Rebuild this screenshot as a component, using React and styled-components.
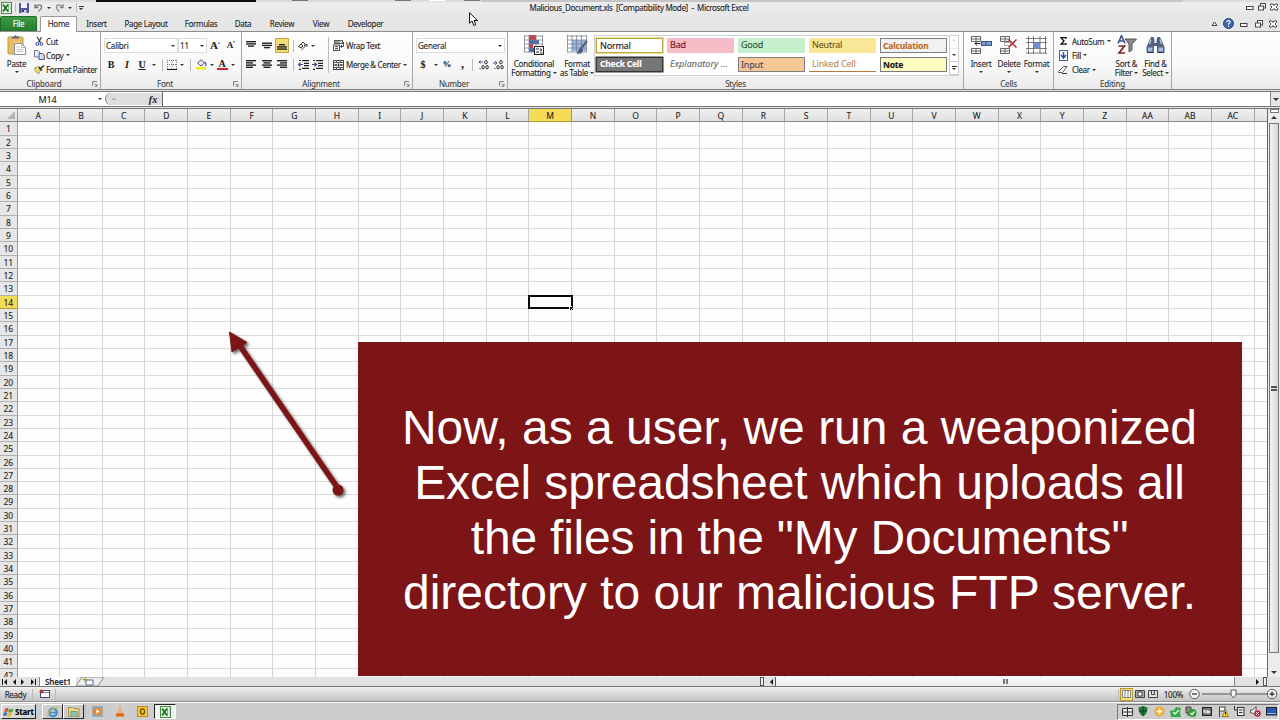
import React from "react";
import styled, { createGlobalStyle, css } from "styled-components";

const COL = 42.667;
const ROW = 13.333;
const ACTIVE_COL = "M";
const ACTIVE_ROW = 14;

const GlobalStyle = createGlobalStyle`
  * { box-sizing: border-box; }
  html, body { margin: 0; padding: 0; overflow: hidden; }
  body {
    width: 1280px;
    height: 720px;
    font-family: "Noto Sans", "Open Sans", sans-serif;
    font-size: 8px;
    letter-spacing: -0.360px;
    color: #1e1e1e;
    -webkit-text-stroke: 0.100px;
  }
  svg { display: block; flex-shrink: 0; }
`;

const Window = styled.div`
  position: relative;
  display: flex;
  flex-direction: column;
  width: 1280px;
  height: 720px;
  background: #e4e4e4;
  white-space: nowrap;
  overflow: hidden;
`;

/* ---------- generic bits ---------- */

const Slot = styled.div`
  display: flex;
  align-items: center;
  justify-content: center;
  flex-shrink: 0;
  width: ${p => p.$w}px;
`;

const Separator = styled.div`
  width: 1px;
  height: ${p => p.$h || 12}px;
  background: #bbb;
`;

const Spacer = styled.div`
  flex: 1;
`;

const Triangle = styled.div`
  width: 0;
  height: 0;
  border: 2px solid transparent;
  border-bottom-width: 0;
  border-top: 2.5px solid #333;
`;

function Drop({ w }) {
  return <Slot $w={w}><Triangle /></Slot>;
}

function Sep({ w, h }) {
  return <Slot $w={w}><Separator $h={h} /></Slot>;
}

function Svg({ w, h, children }) {
  return <svg width={w} height={h} viewBox={`0 0 ${w} ${h}`} fill="none">{children}</svg>;
}

/* ---------- icons ---------- */

const ExcelIcon = () => (
  <Svg w={11} h={12}>
    <rect x="0.5" y="0.5" width="10" height="11" fill="#e8f1e4" stroke="#4c8a4a" />
    <path d="M7.5 2v8M9 3h1M9 5h1M9 7h1" stroke="#8cb584" />
    <path d="M2 2.5l5 7M7 2.5l-5 7" stroke="#1e7a2c" strokeWidth="2" />
  </Svg>
);

const SaveIcon = () => (
  <Svg w={10} h={10}>
    <path d="M0 0h10v10H0z" fill="#4f5797" />
    <path d="M2 0h6v5H2z" fill="#eef0fa" />
    <path d="M2.5 7h5v3h-5z" fill="#c9cde8" />
    <path d="M3 7h2v2H3z" fill="#30376f" />
  </Svg>
);

const UndoIcon = () => (
  <Svg w={9} h={9}>
    <path d="M1 1v3.500h3.500M1.500 4C3 1 8 1 7.500 4.500 7.300 6.500 5.500 7 4.500 8.500" stroke="#777" strokeWidth="1.300" />
  </Svg>
);

const RedoIcon = () => (
  <Svg w={9} h={9}>
    <path d="M8 1v3.500H4.500M7.500 4C6 1 1 1 1.500 4.500 1.700 6.500 3 7 4 8.500" stroke="#888" strokeWidth="1.300" />
  </Svg>
);

const MinIcon = () => (
  <Svg w={8} h={8}>
    <rect x="0.500" y="3.500" width="6.500" height="3" stroke="#444" fill="#fff" />
  </Svg>
);

const RestoreIcon = () => (
  <Svg w={8} h={8}>
    <rect x="2.500" y="0.500" width="5" height="4.500" stroke="#444" fill="#fff" />
    <rect x="0.500" y="3" width="5" height="4" stroke="#444" fill="#fff" />
  </Svg>
);

const CloseIcon = () => (
  <Svg w={8} h={8}>
    <path d="M0.500 1h2.500l1 1.500L5 1h2.500v1.500L6 4l1.500 1.500V7H5L4 5.500 3 7H0.500V5.500L2 4 0.500 2.500z" stroke="#444" fill="#fff" />
  </Svg>
);

const HelpIcon = () => (
  <Svg w={11} h={11}>
    <circle cx="5.500" cy="5.500" r="5" fill="#3c67b0" stroke="#26437c" />
    <path d="M3.800 4.300c0-2.300 3.400-2.200 3.400-0.200 0 1.200-1.600 1.200-1.700 2.600M5.500 7.700v1.200" stroke="#fff" strokeWidth="1.100" />
  </Svg>
);

const PasteIcon = () => (
  <Svg w={20} h={21}>
    <rect x="1" y="2" width="15" height="17" rx="1" fill="#e7bd62" stroke="#c39a45" />
    <path d="M5 3.500V1.500h2L8.500 0 10 1.500h2v2z" fill="#666" />
    <path d="M7 7h6v11H7z" fill="#f7e9bf" opacity="0.600" />
    <path d="M7.500 8.500h7l4 4v7h-11z" fill="#fdfdfd" stroke="#8e8e99" />
    <path d="M14.500 8.500v4h4M9.500 12h3M9.500 14.500h7M9.500 16.500h7" stroke="#b9bcc9" />
  </Svg>
);

const CutIcon = () => (
  <Svg w={9} h={9}>
    <path d="M2 0l3.500 5.500M6.500 0L3.500 5.500" stroke="#333" strokeWidth="1.100" />
    <circle cx="2.300" cy="7" r="1.400" stroke="#2d4a92" />
    <circle cx="6.500" cy="7" r="1.400" stroke="#2d4a92" />
  </Svg>
);

const CopyIcon = () => (
  <Svg w={11} h={10}>
    <path d="M0.500 0.500h3.500l1.500 1.500v5h-5z" fill="#eef1fb" stroke="#6f7895" />
    <path d="M5 3.500h3.500L10.300 5v4.500H5z" fill="#d7ddf2" stroke="#46547f" />
  </Svg>
);

const PainterIcon = () => (
  <Svg w={11} h={9}>
    <path d="M0.500 3l4-1.500 2.500 3-2 4C3 8.500 1 6.500 0.500 3z" fill="#edd86c" stroke="#8a7c43" strokeWidth="0.700" />
    <path d="M5.500 4.500L10 0.500M5 2l3 3.500" stroke="#333" strokeWidth="1.500" />
  </Svg>
);

const BordersIcon = () => (
  <Svg w={10} h={10}>
    <path d="M0.500 0v9M5 0v9M9.500 0v9M0 0.500h10M0 4.500h10" stroke="#777" strokeDasharray="1 1" />
    <path d="M0 9.500h10" stroke="#111" />
  </Svg>
);

const FillColorIcon = () => (
  <Svg w={11} h={11}>
    <path d="M1.500 4L5 0.800 8.500 4 5 7z" fill="#e9ecf5" stroke="#555" />
    <path d="M8.500 3c1.500 1 1.500 3 1 4" stroke="#3a5da6" strokeWidth="1.300" />
    <path d="M0 8h10v2.700H0z" fill="#f3ee2c" />
  </Svg>
);

const AlignIcon = ({ rows, top = 0 }) => (
  <Svg w={10} h={11}>
    {rows.map(([x, w], i) => (
      <rect key={i} x={x} y={top + i * 2.200} width={w} height="1.400" fill="#222" />
    ))}
  </Svg>
);

const IndentIcon = ({ flip }) => (
  <Svg w={11} h={10}>
    <path d="M4 0.700h7M6 3.300h5M6 5.700h5M4 8.300h7M1 9.300h2M1 0.500h2" stroke="#222" strokeWidth="1.200" />
    <path d={flip ? "M0 4.500h4M2.500 2.500l2 2-2 2" : "M1 4.500h4M2.500 2.500l-2 2 2 2"} stroke="#3d5186" strokeWidth="1.200" />
  </Svg>
);

const OrientIcon = () => (
  <Svg w={10} h={10}>
    <path d="M0.500 5.500L3 3l2 2-2 2zM3.500 2.500L5 1l2.500 2.500L6 5" stroke="#333" />
    <path d="M3.500 9L9 3.500M9 3.500H6.500M9 3.500V6" stroke="#555" />
  </Svg>
);

const WrapIcon = () => (
  <Svg w={11} h={11}>
    <rect x="1.500" y="0.500" width="8" height="3" stroke="#555" />
    <rect x="0.500" y="5" width="6" height="5.500" stroke="#555" />
    <path d="M2 6.700h3M2 8.700h3M2 2h5" stroke="#333" />
    <path d="M10.500 2v4.500H7.500M9 5L7.500 6.500 9 8" stroke="#33518f" />
  </Svg>
);

const MergeIcon = () => (
  <Svg w={11} h={10}>
    <rect x="0.500" y="0.500" width="10" height="9" stroke="#444" />
    <path d="M0 2.500h11M0 7.500h11M3.500 0v2.500M7.500 0v2.500M3.500 7.500V10M7.500 7.500V10" stroke="#555" />
    <path d="M1.500 5h2.500M9.500 5H7M5.500 3.500v3" stroke="#222" strokeWidth="1.400" />
  </Svg>
);

const DecimalIcon = ({ less }) => (
  <Svg w={11} h={10}>
    <path d={less ? "M0 3h4M2 1.200L4 3 2 4.800" : "M1 2h4M2.500 0.500L1 2l1.500 1.500"} stroke="#3f5380" />
    <rect x="6.700" y="0.600" width="2.500" height="3.200" rx="1" stroke="#222" />
    <rect x="4" y="5.600" width="2.200" height="3.200" rx="1" stroke="#222" />
    <rect x="8" y="5.600" width="2.200" height="3.200" rx="1" stroke="#222" />
    <path d="M1.500 8h1v1h-1z" fill="#222" />
  </Svg>
);

const ConditionalIcon = () => (
  <Svg w={20} h={20}>
    <path d="M1 1h18v16H1z" fill="#fff" />
    <path d="M5 0h7v5H5zM5 9h4v4H5z" fill="#c8393f" />
    <path d="M5 5h10v4H5zM5 13h6v4H5z" fill="#4a66a8" />
    <path d="M0.500 0v17.500M5 0v17.500M12 0v12M18.500 0v12M0 1h19M0 5h19M0 9h19M0 13h10M0 17h10" stroke="#7d8496" strokeWidth="0.800" />
    <rect x="10.500" y="11.500" width="9" height="8" fill="#fff" stroke="#222" />
    <path d="M12 14h3M12 17h3M16 13.500l2 1.500-2 1M16 18h2.500" stroke="#222" />
  </Svg>
);

const FormatTableIcon = () => (
  <Svg w={21} h={20}>
    <path d="M0.500 0.500h19v16h-19z" fill="#fff" />
    <path d="M5 5h14v11H5z" fill="#9db5e0" />
    <path d="M0.500 0v17M5 0v17M9.500 0v17M14.500 0v17M19.500 0v17M0 1h20M0 5h20M0 9h20M0 13h20M0 17h20" stroke="#79839b" strokeWidth="0.800" />
    <path d="M20 6l-6.500 8" stroke="#5a5f6c" strokeWidth="2" />
    <path d="M14.500 13c-3-0.500-3 3-5 5.500 3 1 6.500 0 6.500-4z" fill="#4d5e86" />
  </Svg>
);

const GridBlocks = () => (
  <path d="M0.500 0.500h9v5h-9zM5 0.500v5M0.500 12.500h9v5h-9zM5 12.500v5M0 15h10M0 3h10" stroke="#666" fill="#fff" />
);

const InsertIcon = () => (
  <Svg w={21} h={18}>
    <GridBlocks />
    <rect x="10.500" y="5.500" width="10" height="4" fill="#7f97cc" stroke="#3c5592" />
    <path d="M15 5.500v4" stroke="#3c5592" />
    <path d="M4 7.500h5.500M6 5.500l-2 2 2 2" stroke="#222" />
  </Svg>
);

const DeleteIcon = () => (
  <Svg w={19} h={18}>
    <GridBlocks />
    <path d="M4.500 6.500h6v3h-6z" stroke="#666" strokeDasharray="1 1" />
    <path d="M8.500 3.500l8 8M16.500 3.500l-8 8" stroke="#b72b35" strokeWidth="1.600" />
  </Svg>
);

const FormatCellsIcon = () => (
  <Svg w={21} h={19}>
    <path d="M2.500 1.500h17v16h-17z" fill="#fff" />
    <path d="M2.500 0v18M7.500 0v18M14 0v18M19.500 0v18M0 2.500h21M0 6.500h21M0 12.500h21M0 17h21" stroke="#6c6c6c" strokeWidth="0.900" />
    <path d="M7.500 7h6.500v5.500H7.500z" fill="#6f8fd0" />
  </Svg>
);

const SigmaIcon = () => (
  <Svg w={7} h={8}>
    <path d="M6 2V0.700H1L4 4 1 7.200h5V6" stroke="#111" strokeWidth="1.300" />
  </Svg>
);

const FillIcon = () => (
  <Svg w={9} h={11}>
    <rect x="0.500" y="0.500" width="8" height="10" fill="#fff" stroke="#445d96" />
    <path d="M4.500 2v5M2 5l2.500 3L7 5" stroke="#2451a8" strokeWidth="1.500" />
  </Svg>
);

const ClearIcon = () => (
  <Svg w={10} h={8}>
    <path d="M0.500 5.500L5.500 0.500h3.500L4.500 6.500h-4z" fill="#fff" stroke="#555" />
    <path d="M4 7.500h5" stroke="#333" />
  </Svg>
);

const SortIcon = () => (
  <Svg w={20} h={20}>
    <path d="M8 4h11.500l-4.500 5v6l-3 2V9z" fill="#8b8b8b" stroke="#555" />
    <path d="M1 8.500L4.500 0.500 8 8.500M2.300 6h4.500" stroke="#3c4d86" strokeWidth="1.500" />
    <path d="M1.500 11h6L2 18h6" stroke="#84202a" strokeWidth="1.700" />
  </Svg>
);

const FindIcon = () => (
  <Svg w={19} h={18}>
    <path d="M4 3l1-2h2.500l1 3v3h2V4l1-3H14l1 2 3.500 8v5.500H11V10H8v6.500H0.500V11z" fill="#51617f" />
    <path d="M2 11.500h4.500v4H2zM12.500 11.500H17v4h-4.500z" fill="#a9bedd" />
    <path d="M5 3.500L3.500 8M14 3.500L15.500 8" stroke="#c4d0e4" strokeWidth="1.200" />
    <path d="M1 16.500h6.500M11.500 16.500H18" stroke="#26304a" />
  </Svg>
);

const LauncherIcon = () => (
  <Svg w={6} h={6}>
    <path d="M0.500 5V0.500H5M2.500 2.500L5 5M5 2.800V5.300H2.500" stroke="#777" strokeWidth="0.900" />
  </Svg>
);

const PointerIcon = () => (
  <Svg w={10} h={15}>
    <path d="M0.500 0.800v10.500l2.500-2.300 1.800 4.500 2-0.800L5 8.500h3.500z" fill="#fff" stroke="#111" />
  </Svg>
);

/* ---------- title bar and tabs ---------- */

const TitleBar = styled.div`
  display: flex;
  align-items: flex-start;
  height: 16px;
  padding-top: 1px;
  background: linear-gradient(#d6d6d6 0, #ededed 3px, #e7e7e7);
`;

const QuickAccess = styled.div`
  display: flex;
  align-items: center;
  height: 13px;
  width: 90px;
`;

const TitleText = styled.div`
  flex: 1;
  text-align: center;
  line-height: 14px;
  padding-right: 56px;
  letter-spacing: -0.340px;
`;

const Controls = styled.div`
  display: flex;
  align-items: center;
  height: ${p => p.$h}px;
`;

const TopEdge = styled.div`
  position: absolute;
  top: 0;
  left: ${p => p.$x}px;
  width: ${p => p.$w}px;
  height: ${p => p.$h || 1}px;
  background: ${p => p.$c || "#777"};
`;

const CustomizeMark = styled.div`
  width: 5px;
  border-top: 1px solid #333;
  padding-top: 1px;
`;

const TabBar = styled.div`
  display: flex;
  height: 16px;
  background: #e6e6e6;
  border-bottom: 1px solid #8d8d8d;
`;

const Tab = styled.div`
  width: ${p => p.$w}px;
  height: 15px;
  line-height: 15px;
  text-align: center;
  letter-spacing: -0.300px;
  ${p => p.$file && css`
    margin-right: 3px;
    color: #fff;
    background: linear-gradient(#3f9a45, #237c2b);
    border: 1px solid #1f6d27;
    border-bottom: 0;
    border-radius: 2px 2px 0 0;
    line-height: 14px;
  `}
  ${p => p.$active && css`
    height: 16px;
    background: #fff;
    border: 1px solid #9a9a9a;
    border-bottom: 0;
    border-radius: 2px 2px 0 0;
    line-height: 14px;
  `}
`;

const tabs = [
  ["Insert", 39], ["Page Layout", 60], ["Formulas", 50], ["Data", 34],
  ["Review", 44], ["View", 34], ["Developer", 55],
];

/* ---------- ribbon ---------- */

const RibbonBar = styled.div`
  display: flex;
  height: 58px;
  background: linear-gradient(#fefefe, #f8f8f8 60%, #eaeaea);
  border-bottom: 1px solid #7c7c7c;
`;

const GroupBox = styled.div`
  display: flex;
  flex-direction: column;
  width: ${p => p.$w}px;
  border-right: 1px solid #a6a6a6;
`;

const GroupBody = styled.div`
  display: flex;
  height: 45px;
`;

const GroupLabel = styled.div`
  display: flex;
  align-items: center;
  justify-content: center;
  position: relative;
  height: 12px;
  padding-right: ${p => (p.$launcher ? 12 : 0)}px;
  color: #444;
  letter-spacing: -0.180px;
`;

const Launcher = styled.div`
  position: absolute;
  right: 2px;
  top: 4px;
`;

function Group({ name, w, launcher, children }) {
  return (
    <GroupBox $w={w}>
      <GroupBody>{children}</GroupBody>
      <GroupLabel $launcher={launcher}>
        {name}
        {launcher && <Launcher><LauncherIcon /></Launcher>}
      </GroupLabel>
    </GroupBox>
  );
}

const BigButton = styled.div`
  display: flex;
  flex-direction: column;
  align-items: center;
  width: ${p => p.$w}px;
  padding-top: 3px;
  line-height: 9px;
  letter-spacing: -0.250px;
`;

const BigIcon = styled.div`
  display: flex;
  align-items: center;
  height: 20px;
  margin-bottom: 4px;
`;

const WithArrow = styled.div`
  display: flex;
  align-items: center;
  gap: 2px;
`;

const ArrowBelow = styled.div`
  padding-top: 3px;
`;

function LargeButton({ w, icon, lines }) {
  const [first, second] = lines;
  return (
    <BigButton $w={w}>
      <BigIcon>{icon}</BigIcon>
      <div>{first}</div>
      {second
        ? <WithArrow>{second}<Triangle /></WithArrow>
        : <ArrowBelow><Triangle /></ArrowBelow>}
    </BigButton>
  );
}

const SmallList = styled.div`
  display: flex;
  flex-direction: column;
  width: ${p => p.$w}px;
  padding-top: 2px;
`;

const SmallRow = styled.div`
  display: flex;
  align-items: center;
  height: 14.500px;
`;

const ToolRows = styled.div`
  display: flex;
  flex-direction: column;
  width: ${p => p.$w}px;
`;

const ToolRow = styled.div`
  display: flex;
  align-items: center;
  height: ${p => p.$h || 19}px;
  margin-top: ${p => p.$mt || 0}px;
`;

const Combo = styled.div`
  display: flex;
  align-items: center;
  justify-content: space-between;
  width: ${p => p.$w}px;
  height: 15px;
  margin-left: ${p => p.$ml || 0}px;
  padding: 0 2px 0 1px;
  background: #fff;
  border: 1px solid #dcdcdc;
  letter-spacing: -0.200px;
`;

const Glyph = styled.span`
  font-family: "Liberation Serif", serif;
  font-weight: bold;
  font-size: ${p => p.$size || 10}px;
  font-style: ${p => (p.$italic ? "italic" : "normal")};
  text-decoration: ${p => (p.$underline ? "underline" : "none")};
  letter-spacing: 0;
  line-height: 11px;
`;

const Caret = styled.span`
  width: 0;
  height: 0;
  margin-bottom: 6px;
  border: 1.500px solid transparent;
  border-${p => (p.$down ? "top" : "bottom")}: 2px solid #3a528c;
`;

const FontColor = styled.div`
  display: flex;
  flex-direction: column;
  align-items: center;
  width: 11px;
  height: 11px;
  border-bottom: 2.500px solid #cf1f2b;
  span { line-height: 9px; }
`;

const Pressed = styled.div`
  display: flex;
  align-items: center;
  justify-content: center;
  width: 14px;
  height: 15px;
  background: #f3dd72;
  border: 1px solid #c2a64c;
`;

const Gallery = styled.div`
  display: flex;
  height: 41px;
  margin-top: 3px;
  width: 365px;
  border: 1px solid #d0d0d0;
  background: #fff;
`;

const StyleGrid = styled.div`
  display: grid;
  grid-template-columns: repeat(5, 67px);
  grid-template-rows: 15px 15px;
  gap: 4px;
  width: 355px;
  padding: 2px 1px;
`;

const StyleCell = styled.div`
  height: 15px;
  line-height: 14px;
  padding-left: 3px;
  font-size: 9px;
  letter-spacing: -0.200px;
  ${p => p.$css}
`;

const GalleryButtons = styled.div`
  display: flex;
  flex-direction: column;
  width: 9px;
  border-left: 1px solid #ccc;
`;

const GalleryButton = styled.div`
  display: flex;
  align-items: center;
  justify-content: center;
  flex: 1;
  border-bottom: 1px solid #ccc;
  opacity: ${p => (p.$off ? 0.4 : 1)};
`;

const cellStyles = [
  ["Normal", "background:#fff;color:#111;border:1px solid #b9a93c;box-shadow:0 0 0 1px #e9de94;line-height:13px;"],
  ["Bad", "background:#f6bcc7;color:#7a1026;"],
  ["Good", "background:#c6efce;color:#22572a;"],
  ["Neutral", "background:#f7e796;color:#6d5312;"],
  ["Calculation", "background:#f2f2f2;color:#bf6a1e;font-weight:bold;font-size:8.5px;border:1px solid #7f7f7f;line-height:13px;padding-left:2px;"],
  ["Check Cell", "background:#767676;color:#fff;font-weight:bold;font-size:8.5px;border:1px solid #333;line-height:12px;box-shadow:0 0 0 0.5px #333;"],
  ["Explanatory ...", "color:#666;font-style:italic;font-size:9px;letter-spacing:0.05px;"],
  ["Input", "background:#f5c795;color:#4b4560;border:1px solid #7f7f7f;line-height:13px;padding-left:2px;"],
  ["Linked Cell", "color:#c08a4d;border-bottom:1.5px solid #b8793a;"],
  ["Note", "background:#fdfdc0;color:#111;font-weight:bold;border:1px solid #7a7a7a;line-height:13px;padding-left:2px;font-size:8.5px;"],
];

function Ribbon() {
  return (
    <RibbonBar>
      <Group name="Clipboard" w={101} launcher>
        <LargeButton w={33} icon={<PasteIcon />} lines={["Paste"]} />
        <SmallList $w={66}>
          <SmallRow><Slot $w={13}><CutIcon /></Slot>Cut</SmallRow>
          <SmallRow><Slot $w={13}><CopyIcon /></Slot>Copy<Drop w={9} /></SmallRow>
          <SmallRow><Slot $w={13}><PainterIcon /></Slot>Format Painter</SmallRow>
        </SmallList>
      </Group>
      <Group name="Font" w={141} launcher>
        <ToolRows $w={140}>
          <ToolRow $h={15} $mt={6}>
            <Combo $w={74} $ml={3}>Calibri<Triangle /></Combo>
            <Combo $w={29}>11<Triangle /></Combo>
            <Slot $w={16}><Glyph $size={11}>A</Glyph><Caret /></Slot>
            <Slot $w={16}><Glyph $size={9}>A</Glyph><Caret $down /></Slot>
          </ToolRow>
          <ToolRow $mt={2}>
            <Slot $w={20}><Glyph>B</Glyph></Slot>
            <Slot $w={12}><Glyph $italic>I</Glyph></Slot>
            <Slot $w={18}><Glyph $underline>U</Glyph></Slot>
            <Drop w={6} />
            <Sep w={10} />
            <Slot $w={10}><BordersIcon /></Slot>
            <Drop w={10} />
            <Sep w={6} />
            <Slot $w={16}><FillColorIcon /></Slot>
            <Drop w={5} />
            <Slot $w={16}><FontColor><Glyph>A</Glyph></FontColor></Slot>
            <Drop w={6} />
          </ToolRow>
        </ToolRows>
      </Group>
      <Group name="Alignment" w={171} launcher>
        <ToolRows $w={84}>
          <ToolRow $h={15} $mt={6}>
            <Slot $w={18}><AlignIcon top={1} rows={[[0, 10], [0, 10], [2, 6]]} /></Slot>
            <Slot $w={13}><AlignIcon top={2.500} rows={[[0, 10], [0, 10], [2, 6]]} /></Slot>
            <Slot $w={17}><Pressed><AlignIcon top={4} rows={[[2, 6], [0, 10], [0, 10]]} /></Pressed></Slot>
            <Sep w={6} />
            <Slot $w={14}><OrientIcon /></Slot>
            <Drop w={6} />
          </ToolRow>
          <ToolRow $mt={2}>
            <Slot $w={18}><AlignIcon top={1} rows={[[0, 10], [0, 7], [0, 10], [0, 7]]} /></Slot>
            <Slot $w={13}><AlignIcon top={1} rows={[[0, 10], [1.500, 7], [0, 10], [1.500, 7]]} /></Slot>
            <Slot $w={17}><AlignIcon top={1} rows={[[0, 10], [3, 7], [0, 10], [3, 7]]} /></Slot>
            <Sep w={6} />
            <Slot $w={14}><IndentIcon /></Slot>
            <Slot $w={15}><IndentIcon flip /></Slot>
          </ToolRow>
        </ToolRows>
        <Sep w={5} h={36} />
        <ToolRows $w={81}>
          <ToolRow $h={15} $mt={6}>
            <Slot $w={15}><WrapIcon /></Slot>Wrap Text
          </ToolRow>
          <ToolRow $mt={2}>
            <Slot $w={15}><MergeIcon /></Slot>Merge &amp; Center<Drop w={8} />
          </ToolRow>
        </ToolRows>
      </Group>
      <Group name="Number" w={95} launcher>
        <ToolRows $w={94}>
          <ToolRow $h={15} $mt={6}>
            <Combo $w={89} $ml={3}>General<Triangle /></Combo>
          </ToolRow>
          <ToolRow $mt={2}>
            <Slot $w={20}><Glyph>{"$"}</Glyph></Slot>
            <Drop w={5} />
            <Slot $w={18}><Glyph $size={8.500}>%</Glyph></Slot>
            <Slot $w={13}><Glyph $size={12}>,</Glyph></Slot>
            <Sep w={7} />
            <Slot $w={15}><DecimalIcon /></Slot>
            <Slot $w={14}><DecimalIcon less /></Slot>
          </ToolRow>
        </ToolRows>
      </Group>
      <Group name="Styles" w={456}>
        <LargeButton w={52} icon={<ConditionalIcon />} lines={["Conditional", "Formatting"]} />
        <LargeButton w={34} icon={<FormatTableIcon />} lines={["Format", "as Table"]} />
        <Gallery>
          <StyleGrid>
            {cellStyles.map(([label, style]) => (
              <StyleCell key={label} $css={style}>{label}</StyleCell>
            ))}
          </StyleGrid>
          <GalleryButtons>
            <GalleryButton $off><Caret /></GalleryButton>
            <GalleryButton><Triangle /></GalleryButton>
            <GalleryButton><CustomizeMark><Triangle /></CustomizeMark></GalleryButton>
          </GalleryButtons>
        </Gallery>
      </Group>
      <Group name="Cells" w={90}>
        <LargeButton w={34} icon={<InsertIcon />} lines={["Insert"]} />
        <LargeButton w={22} icon={<DeleteIcon />} lines={["Delete"]} />
        <LargeButton w={33} icon={<FormatCellsIcon />} lines={["Format"]} />
      </Group>
      <Group name="Editing" w={118}>
        <SmallList $w={58}>
          <SmallRow><Slot $w={18}><SigmaIcon /></Slot>AutoSum<Drop w={9} /></SmallRow>
          <SmallRow><Slot $w={18}><FillIcon /></Slot>Fill<Drop w={9} /></SmallRow>
          <SmallRow><Slot $w={18}><ClearIcon /></Slot>Clear<Drop w={9} /></SmallRow>
        </SmallList>
        <LargeButton w={29} icon={<SortIcon />} lines={["Sort &", "Filter"]} />
        <LargeButton w={29} icon={<FindIcon />} lines={["Find &", "Select"]} />
      </Group>
    </RibbonBar>
  );
}

/* ---------- formula bar ---------- */

const FormulaBar = styled.div`
  display: flex;
  height: 16px;
  margin-top: 1px;
  border-top: 1px solid #777;
  border-bottom: 1px solid #777;
  background: #e6e6e6;
`;

const NameBox = styled.div`
  display: flex;
  align-items: center;
  width: 105px;
  background: #fff;
  font-size: 9px;
  letter-spacing: -0.200px;
`;

const FxArea = styled.div`
  display: flex;
  align-items: center;
  width: 58px;
  background: #fff;
  border-right: 1px solid #666;
`;

const FxPill = styled.div`
  display: flex;
  align-items: center;
  width: 57px;
  height: 12px;
  padding-left: 5px;
  background: #dedede;
  border-left: 1px solid #777;
  border-radius: 7px 0 0 7px;
`;

const FormulaInput = styled.div`
  flex: 1;
  background: #fff;
`;

const ExpandButton = styled.div`
  display: flex;
  align-items: center;
  justify-content: center;
  width: 10px;
  border-left: 1px solid #888;
`;

/* ---------- sheet ---------- */

const Sheet = styled.div`
  display: flex;
  height: 569px;
  margin-top: 1px;
  border-top: 1px solid #777;
`;

const SheetGrid = styled.div`
  width: 1267px;
  overflow: hidden;
  background: #fdfdfd;
`;

const HeaderRow = styled.div`
  display: flex;
  height: 13.300px;
  background: linear-gradient(#efefef, #e0e0e0);
`;

const Corner = styled.div`
  display: flex;
  align-items: flex-end;
  justify-content: flex-end;
  flex-shrink: 0;
  width: 17.500px;
  padding: 2px;
  border-right: 1px solid #999;
  border-bottom: 1px solid #888;
`;

const ColHead = styled.div`
  flex-shrink: 0;
  width: ${COL}px;
  line-height: 13px;
  text-align: center;
  font-size: 8.500px;
  letter-spacing: 0;
  border-right: 1px solid #a3a3a3;
  border-bottom: 1px solid #888;
  ${p => p.$active && "background: #f4dc59; border-color: #b39b33;"}
`;

const Row = styled.div`
  display: flex;
  height: ${ROW}px;
`;

const RowHead = styled.div`
  flex-shrink: 0;
  width: 17.500px;
  line-height: 14px;
  text-align: center;
  font-size: 8.500px;
  letter-spacing: -0.200px;
  background: #e6e6e6;
  border-right: 1px solid #999;
  border-bottom: 1px solid #b0b0b0;
  ${p => p.$active && "background: #f4dc59; border-color: #b39b33;"}
`;

const Cell = styled.div`
  position: relative;
  flex-shrink: 0;
  width: ${COL}px;
  border-right: 1px solid #d6d6d6;
  border-bottom: 1px solid #dadada;
`;

const Selection = styled.div`
  position: absolute;
  inset: -1px -2px -1px -1px;
  border: 2px solid #0a0a0a;

  &::after {
    content: "";
    position: absolute;
    right: -2px;
    bottom: -3px;
    width: 3px;
    height: 3px;
    background: #0a0a0a;
    box-shadow: -1px -1px 0 #fff;
  }
`;

const VScroll = styled.div`
  display: flex;
  flex-direction: column;
  align-items: center;
  width: 13px;
  background: #ececec;
  border-left: 1px solid #666;
`;

const SplitBox = styled.div`
  width: 9px;
  height: 4px;
  border: 1px solid #777;
  background: #fff;
`;

const ScrollArrow = styled.div`
  display: flex;
  align-items: center;
  justify-content: center;
  width: 10px;
  height: 10px;
  transform: ${p => (p.$up ? "rotate(180deg)" : "none")};
`;

const BigTriangle = styled(Triangle)`
  border-width: 3px 3px 0;
`;

const VThumb = styled.div`
  display: flex;
  flex-direction: column;
  align-items: center;
  justify-content: center;
  gap: 1px;
  width: 10px;
  height: 530px;
  background: linear-gradient(90deg, #f4f4f4, #d6d6d6);
  border: 1px solid #777;
`;

const VGrip = styled.div`
  width: 6px;
  height: 2px;
  background: #555;
`;

const letters = "ABCDEFGHIJKLMNOPQRSTUVWXYZ".split("");
const columns = [...letters, "AA", "AB", "AC", ""];
const rows = Array.from({ length: 42 }, (_, i) => i + 1);

function Spreadsheet() {
  return (
    <Sheet>
      <SheetGrid>
        <HeaderRow>
          <Corner><Svg w={8} h={8}><path d="M8 0v8H0z" fill="#b2b2b2" /></Svg></Corner>
          {columns.map(c => <ColHead key={c} $active={c === ACTIVE_COL}>{c}</ColHead>)}
        </HeaderRow>
        {rows.map(r => (
          <Row key={r}>
            <RowHead $active={r === ACTIVE_ROW}>{r}</RowHead>
            {columns.map(c => (
              <Cell key={c}>{c === ACTIVE_COL && r === ACTIVE_ROW && <Selection />}</Cell>
            ))}
          </Row>
        ))}
      </SheetGrid>
      <VScroll>
        <SplitBox />
        <ScrollArrow $up><BigTriangle /></ScrollArrow>
        <VThumb><VGrip /><VGrip /></VThumb>
        <Spacer />
        <ScrollArrow><BigTriangle /></ScrollArrow>
      </VScroll>
    </Sheet>
  );
}

/* ---------- sheet tabs, status bar ---------- */

const SheetBar = styled.div`
  display: flex;
  align-items: stretch;
  height: 10px;
  background: #e2e2e2;
  border-bottom: 1px solid #777;
`;

const SheetTab = styled.div`
  width: 37px;
  text-align: center;
  line-height: 9px;
  font-size: 8px;
  font-weight: 600;
  letter-spacing: -0.100px;
  background: #fff;
  border-left: 1px solid #888;
`;

const TabSplit = styled.div`
  width: 4px;
  margin: 0 ${p => p.$mr || 0}px 0 ${p => p.$ml || 0}px;
  border: 1px solid #555;
  background: #eee;
`;

const HThumb = styled.div`
  display: flex;
  align-items: center;
  justify-content: center;
  gap: 1px;
  width: 460px;
  background: linear-gradient(#fafafa, #ececec);
  border-left: 1px solid #555;
  border-right: 1px solid #888;
`;

const HGrip = styled.div`
  width: 2px;
  height: 5px;
  background: #777;
`;

const StatusBar = styled.div`
  display: flex;
  align-items: center;
  height: 15px;
  background: linear-gradient(#f0f0f0, #d9d9d9 50%, #c4c4c4);
  border-bottom: 1px solid #8d8d8d;
  letter-spacing: -0.250px;
`;

const ViewButton = styled.div`
  display: flex;
  align-items: center;
  justify-content: center;
  width: 13px;
  height: 13px;
  ${p => p.$active && "background: #f5e27d; border: 1px solid #b79c2b;"}
`;

const Taskbar = styled.div`
  display: flex;
  align-items: center;
  height: 18px;
  background: #cdcdcd;
  border-top: 1px solid #fff;
`;

const StartButton = styled.div`
  display: flex;
  align-items: center;
  gap: 1px;
  width: 35px;
  height: 15px;
  margin: 0 6px 0 1px;
  padding-left: 1px;
  font-size: 8px;
  font-weight: bold;
  letter-spacing: -0.200px;
  color: #000;
  background: #d8d8d8;
  border: 1px solid #fff;
  border-right-color: #222;
  border-bottom-color: #222;
`;

const TaskButton = styled.div`
  display: flex;
  align-items: center;
  justify-content: center;
  width: ${p => p.$w || 21}px;
  height: 15px;
  ${p => p.$raised && "border: 1px solid #fff; border-right-color: #222; border-bottom-color: #333;"}
  ${p => p.$pressed && "background: #f0f0f0; border: 1px solid #222; border-right-color: #fff; border-bottom-color: #fff;"}
`;

const Tray = styled.div`
  display: flex;
  align-items: center;
  width: 162px;
  height: 16px;
  margin-right: 1px;
  padding-left: 1px;
  border: 1px solid #777;
  border-right-color: #fff;
  border-bottom-color: #fff;
`;

const NavIcon = ({ dir, bar }) => (
  <Svg w={6} h={6}>
    <path d={dir === "l" ? "M5 0v6L2 3z" : "M1 0v6l3-3z"} fill="#111" />
    {bar && <path d={dir === "l" ? "M0.500 0v6" : "M5.500 0v6"} stroke="#111" />}
  </Svg>
);

function SheetTabs() {
  return (
    <SheetBar>
      <Slot $w={9}><NavIcon dir="l" bar /></Slot>
      <Slot $w={10}><NavIcon dir="l" /></Slot>
      <Slot $w={8}><NavIcon dir="r" /></Slot>
      <Slot $w={12}><NavIcon dir="r" bar /></Slot>
      <SheetTab>Sheet1</SheetTab>
      <Svg w={30} h={9}>
        <path d="M0 9L6 0h22l-6 9z" fill="#ededed" stroke="#888" />
        <path d="M10 3h7v5h-7z" fill="#fff" stroke="#5b6b9a" />
        <path d="M9 0v5M6.500 2.500h5" stroke="#a89a2c" />
      </Svg>
      <Spacer />
      <TabSplit $mr={2} />
      <Slot $w={9}><NavIcon dir="l" /></Slot>
      <HThumb><HGrip /><HGrip /></HThumb>
      <Slot $w={18} />
      <Slot $w={9}><NavIcon dir="r" /></Slot>
      <TabSplit $ml={1} $mr={13} />
    </SheetBar>
  );
}

function Status() {
  return (
    <StatusBar>
      <Slot $w={31}>Ready</Slot>
      <Sep w={3} h={11} />
      <Slot $w={20}>
        <Svg w={11} h={10}>
          <rect x="1.500" y="1.500" width="9" height="7" fill="#fff" stroke="#3e4c7a" />
          <path d="M2 3.500h8" stroke="#6b7db5" />
          <circle cx="2.500" cy="2.500" r="2" fill="#a63a3a" />
        </Svg>
      </Slot>
      <Sep w={3} h={11} />
      <Spacer />
      <Sep w={3} h={11} />
      <ViewButton $active><Svg w={9} h={8}><path d="M0.500 0.500h8v7h-8zM3 0v8M6 0v8" stroke="#777" fill="#fff" strokeWidth="0.900" /></Svg></ViewButton>
      <ViewButton><Svg w={10} h={8}><path d="M0.500 0.500h9v7h-9z" stroke="#444" fill="#aaa" /><path d="M3 2h4v4H3z" fill="#fff" stroke="#444" /></Svg></ViewButton>
      <ViewButton><Svg w={10} h={8}><path d="M0.500 0.500h9v7h-9zM3.500 0.500v4h3v-4" stroke="#444" fill="#ddd" /></Svg></ViewButton>
      <Slot $w={29}>100%</Slot>
      <Svg w={92} h={12}>
        <path d="M14 6h66" stroke="#555" />
        <circle cx="6.500" cy="6" r="4.700" fill="#f6f6f6" stroke="#555" />
        <path d="M4 6h5" stroke="#333" strokeWidth="1.300" />
        <circle cx="84" cy="6" r="4.700" fill="#f6f6f6" stroke="#555" />
        <path d="M81.500 6h5M84 3.500v5" stroke="#333" strokeWidth="1.300" />
        <path d="M43 2h5v5l-2.500 3L43 7z" fill="#f6f6f6" stroke="#555" />
      </Svg>
    </StatusBar>
  );
}

function TrayIcons() {
  return (
    <Tray>
      <Slot $w={16}><Svg w={11} h={10}><path d="M0.500 1.500h10v7h-10zM5.500 0v10M0 5h11" stroke="#333" fill="#eee" /></Svg></Slot>
      <Slot $w={16}><Svg w={10} h={11}><path d="M5 0l4.500 1.500C9.500 6 8 9 5 10.500 2 9 0.500 6 0.500 1.500z" fill="#217a3c" /><path d="M5 1v8.500M1 5h8" stroke="#0f3c22" /></Svg></Slot>
      <Slot $w={16}><Svg w={11} h={11}><circle cx="5.500" cy="5.500" r="5" fill="#f2a52a" /><path d="M5.500 2.500v6M2.500 5.500h6" stroke="#fff3c8" strokeWidth="2" /></Svg></Slot>
      <Slot $w={16}><Svg w={11} h={11}><path d="M0 5l4-1 2-3 5 1-1 4 1 5H1z" fill="#2fae45" /><path d="M3 6l2 2 4-4" stroke="#e4fbe4" strokeWidth="1.400" /></Svg></Slot>
      <Slot $w={16}><Svg w={12} h={11}><path d="M1 1h5v6H1zM3 7v3" fill="#888" stroke="#444" /><circle cx="7.500" cy="7" r="4" fill="#2d9e35" /><path d="M5.500 7l1.500 1.500L9.500 5.500" stroke="#fff" strokeWidth="1.200" /></Svg></Slot>
      <Slot $w={16}><Svg w={10} h={9}><rect x="0.500" y="0.500" width="9" height="8" fill="#777" stroke="#222" /><path d="M2 6V3l2 3V3M5.500 3v3h1V4h1v2" stroke="#fff" strokeWidth="0.800" /></Svg></Slot>
      <Slot $w={16}><Svg w={11} h={11}><path d="M1.500 11V1h6l-1 2 1 2h-6" fill="#fff" stroke="#444" /><path d="M7.500 4l3.200 6.500H4z" fill="#f2d32c" stroke="#6d5f16" strokeWidth="0.700" /><path d="M7.500 6v2.500" stroke="#222" /></Svg></Slot>
      <Slot $w={16}><Svg w={11} h={11}><rect x="3.500" y="1.500" width="6.500" height="8" fill="#eee" stroke="#333" /><path d="M0.500 0v4h3M5 4h3.500M5 6.500h3.500" stroke="#333" /></Svg></Slot>
      <Slot $w={16}><Svg w={11} h={11}><path d="M0.500 4h2L6 0.500v9L2.500 7h-2z" fill="#eee" stroke="#555" /><circle cx="7.500" cy="7.500" r="3.300" fill="#c5283c" /><path d="M6 6l3 3M9 6L6 9" stroke="#fff" /></Svg></Slot>
      <Slot $w={16}><Svg w={11} h={9}><rect x="0.500" y="0.500" width="10" height="7.500" fill="#2a5bb0" stroke="#223" /><path d="M1 6.500h9" stroke="#9fb9e6" /></Svg></Slot>
    </Tray>
  );
}

function WindowsTaskbar() {
  return (
    <Taskbar>
      <StartButton>
        <Svg w={11} h={10}>
          <path d="M2 1.500C3.500 0.500 4.500 1 5.500 1.500L4.500 5C3.500 4.500 2.500 4.500 1 5z" fill="#d8572b" />
          <path d="M6 1.800C7.500 2.500 9 2.300 10.500 1.500L9.500 5C8 5.500 6.500 5.700 5 5.200z" fill="#5ba03a" />
          <path d="M0.800 5.600C2.300 5 3.300 5.200 4.300 5.700L3.300 9C2.300 8.500 1.300 8.500 0 9z" fill="#3b6fc0" />
          <path d="M4.800 5.900C6.300 6.500 7.800 6.300 9.200 5.600L8.200 9C6.800 9.700 5.300 9.700 3.800 9.200z" fill="#e9bd2e" />
        </Svg>
        Start
      </StartButton>
      <TaskButton $raised>
        <Svg w={12} h={12}>
          <circle cx="6" cy="6.500" r="3.800" stroke="#3f8fd0" strokeWidth="2.200" />
          <path d="M3 6.500h7" stroke="#3f8fd0" strokeWidth="1.600" />
          <path d="M0.500 10C-0.500 7 8 0 11.500 1.500" stroke="#dcb84b" strokeWidth="1.200" />
        </Svg>
      </TaskButton>
      <TaskButton $raised>
        <Svg w={12} h={11}>
          <path d="M0.500 1.500h4l1 1h5.500v8H0.500z" fill="#ecd98b" stroke="#a0904d" />
          <path d="M3 10.500v-5h6v5" fill="#8fc3b4" stroke="#6a9b8f" />
        </Svg>
      </TaskButton>
      <Slot $w={3}><Separator $h={15} /></Slot>
      <TaskButton $w={21}>
        <Svg w={11} h={11}>
          <rect x="0.500" y="0.500" width="10" height="10" fill="#7fa9d4" stroke="#9ab" />
          <circle cx="5.500" cy="5.500" r="4" fill="#ef8428" />
          <path d="M4.300 3.300v4.400l3.400-2.200z" fill="#fff" />
        </Svg>
      </TaskButton>
      <TaskButton $w={23}>
        <Svg w={10} h={11}>
          <path d="M5 0l3 8H2z" fill="#ef7f1f" />
          <path d="M3.700 3.500h2.600M3 6h4" stroke="#fff" strokeWidth="1.200" />
          <path d="M0.500 10.500l1-3h7l1 3z" fill="#d9691a" />
        </Svg>
      </TaskButton>
      <TaskButton $w={23}>
        <Svg w={11} h={11}>
          <rect x="0.500" y="0.500" width="10" height="10" fill="#f2c53a" stroke="#c08e18" />
          <ellipse cx="5.500" cy="5.500" rx="2" ry="2.700" stroke="#6b4b08" strokeWidth="1.300" />
        </Svg>
      </TaskButton>
      <TaskButton $pressed $w={22}><ExcelIcon /></TaskButton>
      <Spacer />
      <TrayIcons />
    </Taskbar>
  );
}

/* ---------- annotations floating over the sheet ---------- */

const Callout = styled.div`
  position: absolute;
  left: 358px;
  top: 342px;
  width: 884px;
  height: 334px;
  padding: 58px 1px 0 0;
  background: #7d1416;
  color: #fff;
  text-align: center;
  font-family: "Liberation Sans", Arial, sans-serif;
  font-size: 48px;
  line-height: 55px;
  -webkit-text-stroke: 0;
`;

const CalloutLine = styled.div`
  letter-spacing: ${p => p.$ls}px;
`;

const ArrowLayer = styled.div`
  position: absolute;
  left: 220px;
  top: 325px;
  filter: drop-shadow(2.500px 2.500px 1.500px rgba(0, 0, 0, 0.6));
`;

const PointerLayer = styled.div`
  position: absolute;
  left: 469px;
  top: 12px;
`;

export default function App() {
  return (
    <Window>
      <GlobalStyle />
      <TitleBar>
        <QuickAccess>
          <Slot $w={13}><ExcelIcon /></Slot>
          <Sep w={4} h={9} />
          <Slot $w={14}><SaveIcon /></Slot>
          <Slot $w={15}><UndoIcon /></Slot>
          <Drop w={6} />
          <Slot $w={14}><RedoIcon /></Slot>
          <Drop w={7} />
          <Sep w={6} h={9} />
          <CustomizeMark><Triangle /></CustomizeMark>
        </QuickAccess>
        <TitleText>Malicious_Document.xls&nbsp; [Compatibility Mode] &nbsp;-&nbsp; Microsoft Excel</TitleText>
        <Controls $h={11}>
          <Slot $w={12}><MinIcon /></Slot>
          <Slot $w={11}><RestoreIcon /></Slot>
          <Slot $w={13}><CloseIcon /></Slot>
        </Controls>
      </TitleBar>
      <TabBar>
        <Tab $file $w={37}>File</Tab>
        <Tab $active $w={37}>Home</Tab>
        {tabs.map(([label, w]) => <Tab key={label} $w={w}>{label}</Tab>)}
        <Spacer />
        <Controls $h={15}>
          <Slot $w={14}><Svg w={7} h={5}><path d="M1 4.500L3.500 1 6 4.500z" stroke="#444" fill="#fff" /></Svg></Slot>
          <Slot $w={15}><HelpIcon /></Slot>
          <Slot $w={16}><MinIcon /></Slot>
          <Slot $w={13}><RestoreIcon /></Slot>
          <Slot $w={15}><CloseIcon /></Slot>
        </Controls>
      </TabBar>
      <Ribbon />
      <FormulaBar>
        <NameBox>
          <Slot $w={95}>M14</Slot>
          <Drop w={9} />
        </NameBox>
        <FxArea>
          <FxPill>
            <Svg w={6} h={4}><path d="M0.500 3C1.500 0.500 4.500 0.500 5.500 3z" fill="#aaa" /></Svg>
            <Spacer />
            <Slot $w={18}><Glyph $italic $size={10}>fx</Glyph></Slot>
          </FxPill>
        </FxArea>
        <FormulaInput />
        <ExpandButton><BigTriangle /></ExpandButton>
      </FormulaBar>
      <Spreadsheet />
      <SheetTabs />
      <Status />
      <WindowsTaskbar />

      <TopEdge $x={96} $w={160} $h={2} $c="#0c0c0c" />
      <TopEdge $x={292} $w={16} />
      <TopEdge $x={395} $w={16} />
      <TopEdge $x={429} $w={16} $c="#fff" />
      <TopEdge $x={464} $w={16} />
      <TopEdge $x={481} $w={702} $h={2} $c="#c6c6c6" />

      <ArrowLayer>
        <svg width="140" height="185" viewBox="0 0 140 185">
          <path d="M18 18L119 165" stroke="#7d1416" strokeWidth="5.500" />
          <path d="M9.500 7L27 17.500 12 27z" fill="#7d1416" stroke="#7d1416" />
          <circle cx="118" cy="165" r="5.500" fill="#7d1416" />
        </svg>
      </ArrowLayer>
      <Callout>
        <CalloutLine $ls={0}>Now, as a user, we run a weaponized</CalloutLine>
        <CalloutLine $ls={-0.090}>Excel spreadsheet which uploads all</CalloutLine>
        <CalloutLine $ls={-0.200}>the files in the "My Documents"</CalloutLine>
        <CalloutLine $ls={-0.030}>directory to our malicious FTP server.</CalloutLine>
      </Callout>
      <PointerLayer><PointerIcon /></PointerLayer>
    </Window>
  );
}
